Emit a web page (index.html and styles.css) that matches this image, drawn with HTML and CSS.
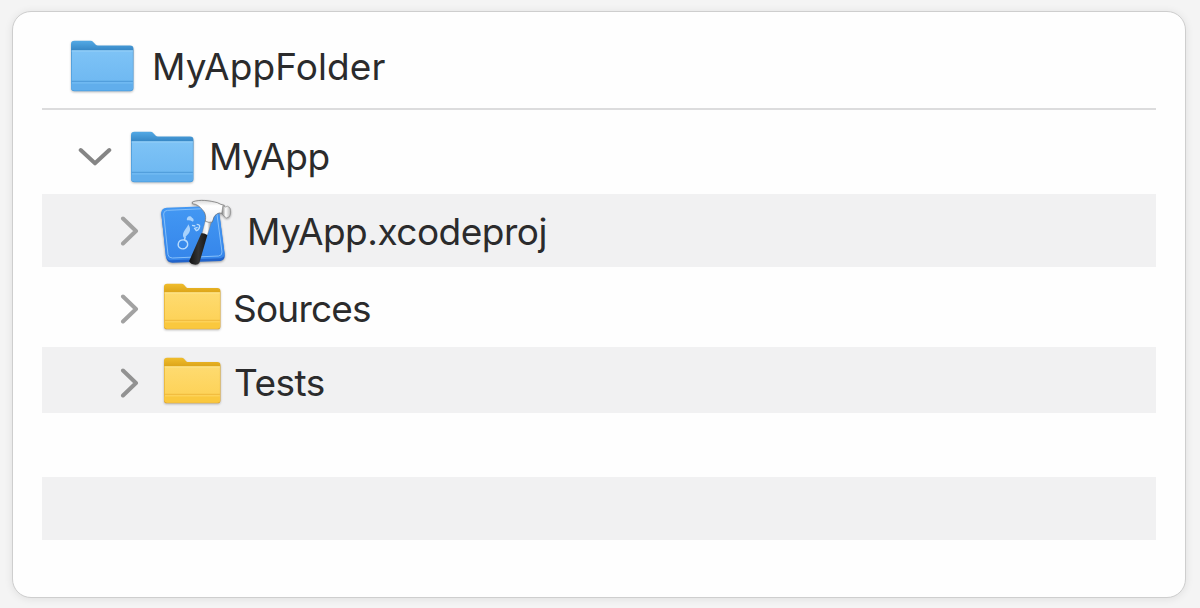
FILE: index.html
```html
<!DOCTYPE html>
<html lang="en">
<head>
    <meta charset="UTF-8">
    <title>MyAppFolder</title>
    <link rel="stylesheet" href="styles.css">
</head>
<body>
    <!-- Shared icons -->
    <svg class="icon-defs" width="0" height="0">
        <defs>
            <linearGradient id="blue-back" x1="0" y1="0" x2="0" y2="1">
                <stop offset="0" stop-color="#53a9e5"/>
                <stop offset="0.2" stop-color="#3585c4"/>
                <stop offset="1" stop-color="#4a9de0"/>
            </linearGradient>
            <linearGradient id="blue-front" x1="0" y1="0" x2="0" y2="1">
                <stop offset="0" stop-color="#7ec3f6"/>
                <stop offset="1" stop-color="#6bb6f1"/>
            </linearGradient>
            <linearGradient id="yellow-back" x1="0" y1="0" x2="0" y2="1">
                <stop offset="0" stop-color="#f0bd2c"/>
                <stop offset="0.2" stop-color="#dba318"/>
                <stop offset="1" stop-color="#e0a42b"/>
            </linearGradient>
            <linearGradient id="yellow-front" x1="0" y1="0" x2="0" y2="1">
                <stop offset="0" stop-color="#fedb70"/>
                <stop offset="1" stop-color="#fdd052"/>
            </linearGradient>
            <linearGradient id="tile" x1="0" y1="0" x2="0" y2="1">
                <stop offset="0" stop-color="#4398f3"/>
                <stop offset="1" stop-color="#3585ea"/>
            </linearGradient>
            <linearGradient id="steel" x1="0" y1="0" x2="0" y2="1">
                <stop offset="0" stop-color="#d9d9d9"/>
                <stop offset="0.25" stop-color="#ffffff"/>
                <stop offset="1" stop-color="#f0f1f4"/>
            </linearGradient>
            <linearGradient id="knob" x1="0" y1="0" x2="1" y2="0">
                <stop offset="0" stop-color="#777"/>
                <stop offset="0.45" stop-color="#ffffff"/>
                <stop offset="1" stop-color="#b5b5b5"/>
            </linearGradient>
            <linearGradient id="shaft" x1="0" y1="0" x2="1" y2="0">
                <stop offset="0" stop-color="#ddd"/>
                <stop offset="0.5" stop-color="#fff"/>
                <stop offset="1" stop-color="#777"/>
            </linearGradient>
            <linearGradient id="grip" x1="0" y1="0" x2="1" y2="0">
                <stop offset="0" stop-color="#111"/>
                <stop offset="0.5" stop-color="#333"/>
                <stop offset="1" stop-color="#161616"/>
            </linearGradient>
            <symbol id="folder" viewBox="0 0 64 52">
                <path class="folder-back" d="M1 4Q1 .8 4.5 .8H20.5Q22.2 .8 23.4 2.2L25.5 4.6Q26.5 5.6 28 5.6H60Q63.5 5.6 63.5 9V48Q63.5 51.3 60 51.3H4.5Q1 51.3 1 48Z"/>
                <path class="folder-front" d="M1.6 10.4H62.9V47.5Q62.9 50.3 60 50.3H4.5Q1.6 50.3 1.6 47.5Z"/>
                <path class="folder-shine" d="M1.6 10.9H62.9"/>
                <path class="folder-base" d="M1.6 43.7H62.9V47.5Q62.9 50.3 60 50.3H4.5Q1.6 50.3 1.6 47.5Z"/>
                <path class="folder-crease" d="M1.6 41.3H62.9"/>
            </symbol>
        </defs>
    </svg>

    <div class="panel">
        <!-- Header -->
        <div class="row row-header">
            <svg class="folder blue"><use href="#folder"/></svg>
            <span class="label">MyAppFolder</span>
        </div>

        <!-- File tree -->
        <div class="row row-app">
            <svg class="chevron-down" viewBox="0 0 34 20"><path d="M2.7 3L17 16.3L31.3 3"/></svg>
            <svg class="folder blue"><use href="#folder"/></svg>
            <span class="label">MyApp</span>
        </div>
        <div class="row row-project shaded">
            <svg class="chevron" viewBox="0 0 20 30"><path d="M3 2.5L16 15L3 27.5"/></svg>
            <svg class="project" viewBox="0 0 252 228">
                <path class="tile-edge" d="M22 60Q22 46 38 44L176 38Q193 38 195 54L212 184Q213 198 200 201L55 206Q40 206 37 192Z"/>
                <path class="tile" d="M22 56Q22 43 38 41L176 36Q193 36 195 50L212 178Q213 190 199 193L52 199Q38 199 35 185Z"/>
                <path class="tile-line" d="M29 60Q29 50 40 49L172 43Q186 43 188 54L204 174Q205 184 194 186L55 192Q44 192 42 182Z"/>
                <g>
                    <path class="ring" d="M91 137L94 129M91 138C103 141 105 157 93 163C80 168 70 158 73 148C75 140 82 137 91 138Z"/>
                    <path class="fill" d="M88 130C83 113 98 106 103 91C116 112 102 120 92 132Z"/>
                    <path class="fill" d="M99 79C96 69 108 62 114 71C122 75 119 85 114 82Q108 77 99 79Z"/>
                    <path class="ring" d="M114 94L124 96M128 91Q137 91 137 97Q136 107 127 110L122 103L131 100"/>
                </g>
                <path class="shaft" d="M156 72L175 76L160 123L144 119Z"/>
                <path class="grip" d="M142 118Q151 116 160 124L136 207Q131 214 117 211Q105 207 106 200Z"/>
                <path class="steel" d="M115 24C137 15 167 20 190 26Q200 32 211 34L209 59Q194 54 188 60Q179 65 175 84Q165 87 154 82C157 65 153 55 145 47C137 37 128 30 115 29Z"/>
                <path class="knob" d="M207 34L214 39Q221 33 228 42Q233 59 225 69Q217 76 210 66L203 59Z"/>
            </svg>
            <span class="label">MyApp.xcodeproj</span>
        </div>
        <div class="row row-sources">
            <svg class="chevron" viewBox="0 0 20 30"><path d="M3 2.5L16 15L3 27.5"/></svg>
            <svg class="folder yellow"><use href="#folder"/></svg>
            <span class="label">Sources</span>
        </div>
        <div class="row row-tests shaded">
            <svg class="chevron dark" viewBox="0 0 20 30"><path d="M3 2.5L16 15L3 27.5"/></svg>
            <svg class="folder yellow"><use href="#folder"/></svg>
            <span class="label">Tests</span>
        </div>
        <div class="row row-blank"></div>
        <div class="row row-last shaded"></div>
    </div>
</body>
</html>
```
FILE: styles.css
```css
/* Global Styles */
* {
    margin: 0;
    padding: 0;
    box-sizing: border-box;
}

body {
    height: 608px;
    padding: 11px 14px 10px 12px;
    overflow: hidden;
    background-color: #f4f4f4;
    font-family: Inter, "Liberation Sans", sans-serif;
    color: #2b2b2c;
}

.icon-defs {
    position: absolute;
}

.panel {
    height: 587px;
    padding: 0 29px;
    background-color: #fefefe;
    border: 1px solid #cecece;
    border-radius: 19px;
    box-shadow: 0 1px 9px rgba(0, 0, 0, 0.09);
}

/* Rows */
.row {
    display: flex;
    align-items: center;
}

.row svg {
    flex: none;
}

.shaded {
    background-color: #f1f1f2;
}

.row-header {
    height: 98px;
    padding: 12px 0 0 28px;
    border-bottom: 2px solid #dcdcdd;
}

.row-app {
    height: 84px;
    padding: 9px 0 0 36px;
}

.row-project {
    height: 73px;
    padding-left: 78px;
}

.row-sources {
    height: 80px;
    padding: 3px 0 0 78px;
}

.row-tests {
    height: 66px;
    padding: 5px 0 0 78px;
}

.row-blank {
    height: 64px;
}

.row-last {
    height: 63px;
}

/* Labels */
.label {
    font-size: 37px;
    line-height: 46px;
    letter-spacing: -0.5px;
    white-space: nowrap;
}

.row-header .label {
    margin: 2px 0 0 18px;
    letter-spacing: 0.1px;
}

.row-app .label {
    margin-left: 15px;
    letter-spacing: -0.4px;
}

.row-project .label {
    margin: 2px 0 0 9px;
}

.row-sources .label {
    margin-left: 12px;
    letter-spacing: -0.8px;
}

.row-tests .label {
    margin: 1px 0 0 13px;
}

/* Folders */
.folder {
    width: 64px;
    height: 52px;
    filter: drop-shadow(0 1px 1px rgba(0, 0, 0, 0.25));
}

.row-app .folder {
    margin-left: 18px;
}

.yellow {
    width: 58px;
    height: 47px;
    margin: 0 0 4px 23px;
}

.blue {
    --back: url(#blue-back);
    --front: url(#blue-front);
    --shine: #9bd3fa;
    --crease: #4c99d8;
    --base: #61aeec;
}

.yellow {
    --back: url(#yellow-back);
    --front: url(#yellow-front);
    --shine: #ffe99a;
    --crease: #eeb638;
    --base: #fac83e;
}

.folder-back {
    fill: var(--back);
}

.folder-front {
    fill: var(--front);
}

.folder-shine {
    stroke: var(--shine);
}

.folder-crease {
    stroke: var(--crease);
}

.folder-base {
    fill: var(--base);
}

/* Chevrons */
.chevron,
.chevron-down {
    fill: none;
    stroke: #a2a2a2;
    stroke-width: 4;
    stroke-linecap: round;
    stroke-linejoin: round;
}

.chevron {
    width: 20px;
    height: 30px;
}

.chevron-down {
    width: 34px;
    height: 20px;
    stroke: #858585;
}

.dark {
    stroke: #929292;
}

/* Project icon */
.project {
    width: 84px;
    height: 76px;
    margin: 3px 0 0 14px;
    filter: drop-shadow(0 1px 1px rgba(0, 0, 0, 0.35));
}

.tile-edge {
    fill: #2264cb;
}

.tile {
    fill: url(#tile);
}

.tile-line {
    fill: none;
    stroke: #85bff9;
    stroke-width: 3;
}

.ring {
    fill: none;
    stroke: #b9dcfd;
    stroke-width: 4;
}

.fill {
    fill: #a8d2fc;
}

.steel {
    fill: url(#steel);
    stroke: #666;
    stroke-width: 2;
}

.shaft {
    fill: url(#shaft);
    stroke: #777;
    stroke-width: 1;
}

.knob {
    fill: url(#knob);
    stroke: #8a8a8a;
    stroke-width: 2;
}

.grip {
    fill: url(#grip);
}
```
